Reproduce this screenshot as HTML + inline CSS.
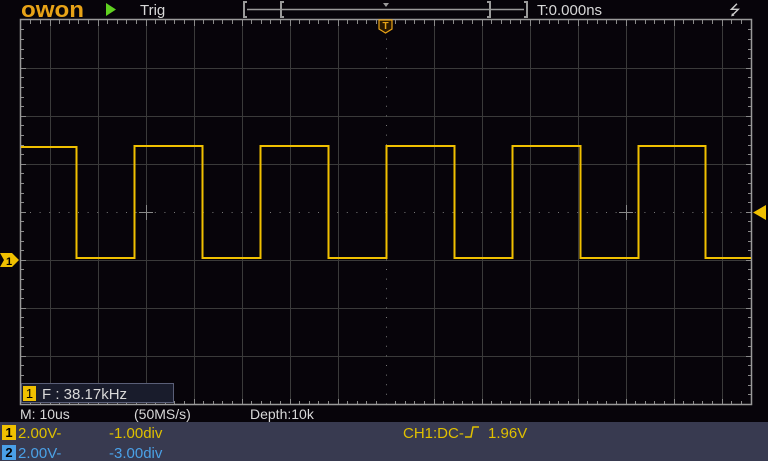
<!DOCTYPE html>
<html><head><style>
html,body{margin:0;padding:0;background:#07040a;width:768px;height:461px;overflow:hidden}
svg{display:block}
text{font-family:"Liberation Sans",sans-serif}
</style></head><body>
<svg width="768" height="461" viewBox="0 0 768 461">
<rect width="768" height="461" fill="#07040a"/>
<!-- logo -->
<text x="21" y="17" font-size="22" font-weight="bold" fill="#e8a317" textLength="63" lengthAdjust="spacingAndGlyphs">owon</text>
<polygon points="106,3 106,16 116,9.5" fill="#5fd020"/>
<text x="140" y="15" font-size="15" fill="#d8d8d8">Trig</text>
<!-- memory bar -->
<g stroke="#9a9a9a" stroke-width="2" fill="none">
<path d="M247,2 H244 V17 H247"/>
<path d="M524,2 H527 V17 H524"/>
<line x1="247" y1="9.5" x2="524" y2="9.5" stroke-width="1.5"/>
<path d="M284,2 H281 V17 H284"/>
<path d="M487,2 H490 V17 H487"/>
</g>
<polygon points="383,3 389,3 386,7" fill="#999"/>
<text x="537" y="15" font-size="15" fill="#d8d8d8">T:0.000ns</text>
<text x="729" y="15" font-size="14" fill="#ccc">⭍</text>
<!-- grid -->
<g stroke="#3a3a3a" stroke-width="1">
<path d="M50.5,20V405M98.5,20V405M146.5,20V405M194.5,20V405M242.5,20V405M290.5,20V405M338.5,20V405M434.5,20V405M482.5,20V405M530.5,20V405M578.5,20V405M626.5,20V405M674.5,20V405M722.5,20V405"/>
<path d="M20,68.5H752M20,116.5H752M20,164.5H752M20,260.5H752M20,308.5H752M20,356.5H752"/>
</g>
<g stroke="#777" stroke-width="1" stroke-dasharray="1,8.6">
<line x1="30" y1="212.5" x2="752" y2="212.5"/>
<line x1="386.5" y1="29" x2="386.5" y2="405"/>
</g>
<g stroke="#888" stroke-width="1">
<line x1="139" y1="212.5" x2="153" y2="212.5"/><line x1="146.5" y1="205" x2="146.5" y2="220"/>
<line x1="619" y1="212.5" x2="633" y2="212.5"/><line x1="626.5" y1="205" x2="626.5" y2="220"/>
</g>
<!-- ticks -->
<g stroke="#8a8a8a" stroke-width="1">
<path id="tt" d="M30.5,20v4M40.5,20v4M59.5,20v4M69.5,20v4M78.5,20v4M88.5,20v4M107.5,20v4M117.5,20v4M126.5,20v4M136.5,20v4M155.5,20v4M165.5,20v4M174.5,20v4M184.5,20v4M203.5,20v4M213.5,20v4M222.5,20v4M232.5,20v4M251.5,20v4M261.5,20v4M270.5,20v4M280.5,20v4M299.5,20v4M309.5,20v4M318.5,20v4M328.5,20v4M347.5,20v4M357.5,20v4M366.5,20v4M376.5,20v4M395.5,20v4M405.5,20v4M414.5,20v4M424.5,20v4M443.5,20v4M453.5,20v4M462.5,20v4M472.5,20v4M491.5,20v4M501.5,20v4M510.5,20v4M520.5,20v4M539.5,20v4M549.5,20v4M558.5,20v4M568.5,20v4M587.5,20v4M597.5,20v4M606.5,20v4M616.5,20v4M635.5,20v4M645.5,20v4M654.5,20v4M664.5,20v4M683.5,20v4M693.5,20v4M702.5,20v4M712.5,20v4M731.5,20v4M741.5,20v4"/>
<use href="#tt" transform="translate(0,381)"/>
<path d="M50.5,20v6M98.5,20v6M146.5,20v6M194.5,20v6M242.5,20v6M290.5,20v6M338.5,20v6M434.5,20v6M482.5,20v6M530.5,20v6M578.5,20v6M626.5,20v6M674.5,20v6M722.5,20v6"/>
<path d="M50.5,405v-6M98.5,405v-6M146.5,405v-6M194.5,405v-6M242.5,405v-6M290.5,405v-6M338.5,405v-6M434.5,405v-6M482.5,405v-6M530.5,405v-6M578.5,405v-6M626.5,405v-6M674.5,405v-6M722.5,405v-6"/>
<path id="lt" d="M20,29.5h4M20,39.5h4M20,49.5h4M20,58.5h4M20,68.5h6M20,77.5h4M20,87.5h4M20,97.5h4M20,106.5h4M20,116.5h6M20,125.5h4M20,135.5h4M20,145.5h4M20,154.5h4M20,164.5h6M20,173.5h4M20,183.5h4M20,193.5h4M20,202.5h4M20,212.5h6M20,221.5h4M20,231.5h4M20,241.5h4M20,250.5h4M20,260.5h6M20,269.5h4M20,279.5h4M20,289.5h4M20,298.5h4M20,308.5h6M20,317.5h4M20,327.5h4M20,337.5h4M20,346.5h4M20,356.5h6M20,365.5h4M20,375.5h4M20,385.5h4M20,394.5h4"/>
<use href="#lt" transform="translate(772,0) scale(-1,1)"/>
</g>
<rect x="20.5" y="19.5" width="731" height="385" fill="none" stroke="#9a9a9a" stroke-width="1.5"/>
<!-- trigger T marker -->
<path d="M379,20 H392 V29 L385.5,33 L379,29 Z" fill="#2a1800" stroke="#e8a317" stroke-width="1.2"/>
<text x="385.5" y="29" font-size="10" font-weight="bold" fill="#e8a317" text-anchor="middle">T</text>
<!-- waveform -->
<path d="M21,147 H76.5 V258 H134.5 V146 H202.5 V258 H260.5 V146 H328.5 V258 H386.5 V146 H454.5 V258 H512.5 V146 H580.5 V258 H638.5 V146 H705.5 V258 H751" fill="none" stroke="#f0c000" stroke-width="2"/>
<!-- ch1 marker -->
<path d="M0,253 H12 L19,260 L12,267 H0 L4,260 Z" fill="#f0c000"/>
<text x="9" y="265" font-size="11" font-weight="bold" fill="#000" text-anchor="middle">1</text>
<path d="M766,205 L753,212.5 L766,220 Z" fill="#f0c000"/>
<!-- freq box -->
<rect x="21.5" y="383.5" width="152" height="19" fill="#191c2c" stroke="#5a5f78"/>
<rect x="23" y="386" width="13" height="15" fill="#f0c000"/>
<text x="29.5" y="398" font-size="13" fill="#000" text-anchor="middle">1</text>
<text x="42" y="399" font-size="15" fill="#d8d8d8">F : 38.17kHz</text>
<!-- status -->
<text x="20" y="419" font-size="14" fill="#d8d8d8">M: 10us</text>
<text x="134" y="419" font-size="14" fill="#d8d8d8">(50MS/s)</text>
<text x="250" y="419" font-size="14" fill="#d8d8d8">Depth:10k</text>
<rect x="0" y="422" width="768" height="39" fill="#383a50"/>
<rect x="2" y="425" width="14" height="15" fill="#f0c000"/>
<text x="9" y="437" font-size="13" font-weight="bold" fill="#000" text-anchor="middle">1</text>
<text x="18" y="438" font-size="15" fill="#e0c000">2.00V-</text>
<text x="109" y="438" font-size="15" fill="#e0c000">-1.00div</text>
<text x="403" y="438" font-size="15" fill="#e0c000">CH1:DC-</text>
<path d="M465,437 H471 L473,427 H479" fill="none" stroke="#e0c000" stroke-width="1.5"/>
<text x="488" y="438" font-size="15" fill="#e0c000">1.96V</text>
<rect x="2" y="445" width="14" height="15" fill="#4aa0e8"/>
<text x="9" y="457" font-size="13" font-weight="bold" fill="#000" text-anchor="middle">2</text>
<text x="18" y="458" font-size="15" fill="#4aa0e8">2.00V-</text>
<text x="109" y="458" font-size="15" fill="#4aa0e8">-3.00div</text>
</svg>
</body></html>
